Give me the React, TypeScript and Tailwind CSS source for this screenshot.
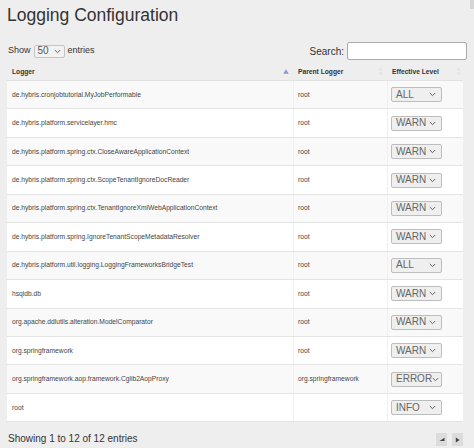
import React from "react";

type Row = { logger: string; parent: string; level: string };

const rows: Row[] = [
  { logger: "de.hybris.cronjobtutorial.MyJobPerformable", parent: "root", level: "ALL" },
  { logger: "de.hybris.platform.servicelayer.hmc", parent: "root", level: "WARN" },
  { logger: "de.hybris.platform.spring.ctx.CloseAwareApplicationContext", parent: "root", level: "WARN" },
  { logger: "de.hybris.platform.spring.ctx.ScopeTenantIgnoreDocReader", parent: "root", level: "WARN" },
  { logger: "de.hybris.platform.spring.ctx.TenantIgnoreXmlWebApplicationContext", parent: "root", level: "WARN" },
  { logger: "de.hybris.platform.spring.IgnoreTenantScopeMetadataResolver", parent: "root", level: "WARN" },
  { logger: "de.hybris.platform.util.logging.LoggingFrameworksBridgeTest", parent: "root", level: "ALL" },
  { logger: "hsqldb.db", parent: "root", level: "WARN" },
  { logger: "org.apache.ddlutils.alteration.ModelComparator", parent: "root", level: "WARN" },
  { logger: "org.springframework", parent: "root", level: "WARN" },
  { logger: "org.springframework.aop.framework.Cglib2AopProxy", parent: "org.springframework", level: "ERROR" },
  { logger: "root", parent: "", level: "INFO" },
];

function Chevron() {
  return (
    <svg width="7" height="5" viewBox="0 0 7 5" className="shrink-0">
      <path d="M0.8 1 L3.5 3.7 L6.2 1" fill="none" stroke="#666" strokeWidth="1" />
    </svg>
  );
}

function SortBoth() {
  return (
    <svg width="5" height="9" viewBox="0 0 5 9">
      <path d="M2.5 0.5 L4.5 3.5 L0.5 3.5 Z" fill="#e2e2e2" />
      <path d="M2.5 8.5 L4.5 5.5 L0.5 5.5 Z" fill="#e2e2e2" />
    </svg>
  );
}

function LevelSelect({ value }: { value: string }) {
  return (
    <div className="flex h-[15px] w-[51px] items-center justify-between rounded-[2px] border border-[#bdbdbd] bg-[#efefef] pl-[4px] pr-[5px]">
      <span className="text-[10px] leading-none text-[#666]">{value}</span>
      <Chevron />
    </div>
  );
}

export default function App() {
  return (
    <div
      className="relative h-[448px] w-[474px] overflow-hidden bg-[#eeeeee] text-[#333]"
      style={{ fontFamily: '"Liberation Sans", Arial, sans-serif' }}
    >
      {/* scrollbar nub */}
      <div className="absolute right-0 top-0 h-[9px] w-[4px] bg-[#d6d6d6]" />

      <h1 className="pl-[7px] pt-[3px] text-[17.5px] leading-[24px] text-[#333]">Logging Configuration</h1>

      <div className="mt-[15px] flex h-[18px] items-center pl-[8px] pr-[7px]">
        <span className="text-[9px]">Show</span>
        <div className="ml-[3px] flex h-[13px] w-[31px] items-center justify-between rounded-[2px] border border-[#c4c4c4] bg-[#f2f2f2] pl-[3px] pr-[3px]">
          <span className="text-[10px] leading-none text-[#555]">50</span>
          <Chevron />
        </div>
        <span className="ml-[3px] text-[9px]">entries</span>
        <span className="ml-auto text-[10px]">Search:</span>
        <div className="ml-[3px] h-[18px] w-[120px] rounded-[2px] border border-[#aaa] bg-white" />
      </div>

      <div className="ml-[7px] mt-[4px] w-[456px] text-[6.7px]">
        <div className="grid h-[17px] grid-cols-[286px_94px_76px] items-center border-b border-[#e2e2e2] font-bold">
          <div className="flex items-center justify-between pl-[5px] pr-[4px]">
            <span>Logger</span>
            <svg width="6" height="5" viewBox="0 0 6 5">
              <path d="M3 0.3 L5.8 4.7 L0.2 4.7 Z" fill="#8e95d8" />
            </svg>
          </div>
          <div className="flex items-center justify-between pl-[5px] pr-[4px]">
            <span>Parent Logger</span>
            <SortBoth />
          </div>
          <div className="flex items-center justify-between pl-[5px] pr-[2px]">
            <span>Effective Level</span>
            <SortBoth />
          </div>
        </div>
        {rows.map((r, i) => (
          <div
            key={r.logger}
            className={`grid h-[28.45px] grid-cols-[286px_94px_76px] items-center border-b border-[#e4e4e4] text-[#444] ${
              i % 2 === 0 ? "bg-[#f9f9f9]" : "bg-white"
            }`}
          >
            <div className="flex h-full items-center pl-[5px]">{r.logger}</div>
            <div className="flex h-full items-center border-l border-[#f0f0f0] pl-[4px]">{r.parent}</div>
            <div className="flex h-full items-center border-l border-[#f0f0f0] pl-[3px]">
              <LevelSelect value={r.level} />
            </div>
          </div>
        ))}
      </div>

      <div className="mt-[9px] flex items-center pl-[8px] pr-[11px]">
        <span className="text-[10px]">Showing 1 to 12 of 12 entries</span>
        <div className="ml-auto mt-[2px] flex gap-[5px]">
          <div className="flex h-[13px] w-[11px] items-center justify-center bg-[#dcdcdc]">
            <svg width="6" height="5" viewBox="0 0 6 5">
              <path d="M0.5 4 L5.5 0.8 L5.5 4 Z" fill="#444" />
            </svg>
          </div>
          <div className="flex h-[13px] w-[11px] items-center justify-center bg-[#dcdcdc]">
            <svg width="5" height="6" viewBox="0 0 5 6">
              <path d="M0.8 0.5 L4.5 3 L0.8 5.5 Z" fill="#444" />
            </svg>
          </div>
        </div>
      </div>
    </div>
  );
}
